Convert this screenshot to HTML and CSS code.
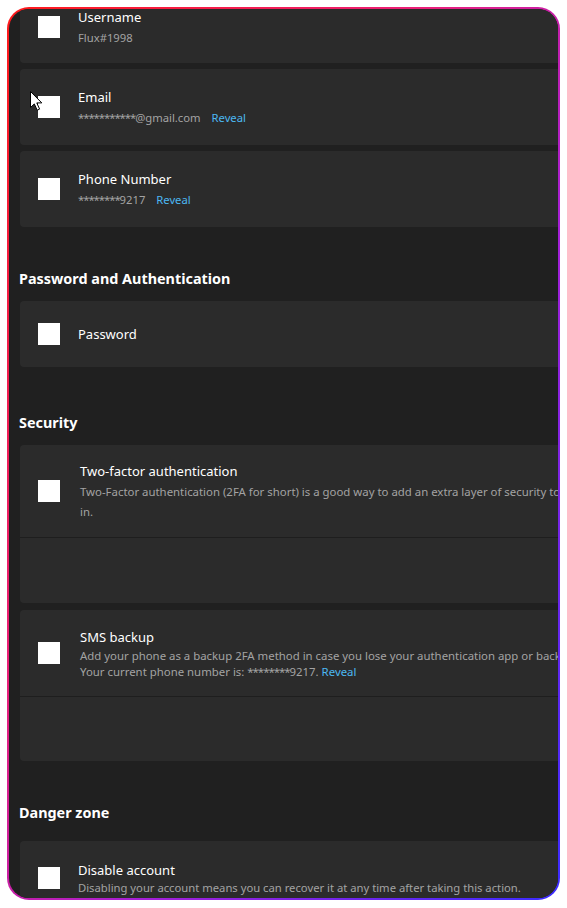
FILE: index.html
```html
<!DOCTYPE html>
<html lang="en">
<head>
<meta charset="utf-8">
<title>Account settings</title>
<link rel="stylesheet" href="styles.css">
</head>
<body>
<div class="window">
  <div class="viewport">
    <div class="content">
      <div class="group">
        <div class="card card-clipped">
          <span class="icon"></span>
          <div class="text">
            <div class="title">Username</div>
            <div class="sub">Flux#1998</div>
          </div>
        </div>
        <div class="card">
          <span class="icon"></span>
          <div class="text">
            <div class="title">Email</div>
            <div class="sub"><span class="mask">***********</span>@gmail.com <a class="reveal" href="#">Reveal</a></div>
          </div>
        </div>
        <div class="card">
          <span class="icon"></span>
          <div class="text">
            <div class="title">Phone Number</div>
            <div class="sub"><span class="mask">********</span>9217 <a class="reveal" href="#">Reveal</a></div>
          </div>
        </div>
      </div>

      <h2 class="section-title">Password and Authentication</h2>
      <div class="card card-single">
        <span class="icon"></span>
        <div class="text">
          <div class="title">Password</div>
        </div>
      </div>

      <h2 class="section-title section-title-wide">Security</h2>
      <div class="group group-loose">
        <div class="expander">
          <div class="expander-head">
            <span class="icon"></span>
            <div class="text">
              <div class="title">Two-factor authentication</div>
              <div class="desc">Two-Factor authentication (2FA for short) is a good way to add an extra layer of security to your account to make sure that only you can log<br>in.</div>
            </div>
          </div>
          <div class="expander-body"></div>
        </div>
        <div class="expander">
          <div class="expander-head expander-head-sms">
            <span class="icon"></span>
            <div class="text">
              <div class="title">SMS backup</div>
              <div class="desc desc-tight">Add your phone as a backup 2FA method in case you lose your authentication app or backup codes.<br>Your current phone number is: <span class="mask">********</span>9217. <a class="reveal-inline" href="#">Reveal</a></div>
            </div>
          </div>
          <div class="expander-body expander-body-sms"></div>
        </div>
      </div>

      <h2 class="section-title section-title-danger">Danger zone</h2>
      <div class="card card-compact">
        <span class="icon"></span>
        <div class="text">
          <div class="title">Disable account</div>
          <div class="sub">Disabling your account means you can recover it at any time after taking this action.</div>
        </div>
      </div>
    </div>
  </div>
  <svg class="cursor" width="13" height="20" viewBox="0 0 13 20" aria-hidden="true">
    <path d="M0.5 0.5 L0.5 16.5 L4.3 12.9 L7.2 19.2 L9.6 18.1 L6.8 11.9 L11.8 11.9 Z" fill="#fff" stroke="#000" stroke-width="1" stroke-linejoin="miter"/>
  </svg>
</div>
</body>
</html>
```

FILE: styles.css
```css
html, body {
  margin: 0;
  padding: 0;
  background: #ffffff;
}

body {
  font-family: "Noto Sans", "Open Sans", sans-serif;
  color: #ffffff;
}

.window {
  position: relative;
  margin: 7px;
  height: 893px;
  box-sizing: border-box;
  border: 2px solid transparent;
  border-radius: 22px;
  background:
    linear-gradient(#202020, #202020) padding-box,
    linear-gradient(to bottom right, #ff1a1a 0%, #ea1f7a 38%, #a61fd6 62%, #3a2cff 100%) border-box;
}

.window::before {
  content: "";
  position: absolute;
  inset: -4px;
  border-radius: 26px;
  background: linear-gradient(to bottom right, #ff1a1a 0%, #ea1f7a 38%, #a61fd6 62%, #3a2cff 100%);
  filter: blur(3px);
  opacity: 0.65;
  z-index: -1;
}

.viewport {
  height: 100%;
  overflow: hidden;
  border-radius: 20px;
}

.content {
  width: 820px;
  margin-top: -20px;
  padding-left: 11px;
}

.group {
  display: flex;
  flex-direction: column;
  gap: 6px;
}

.group-loose {
  gap: 7px;
}

.card {
  display: flex;
  align-items: center;
  gap: 18px;
  padding: 17px 18px;
  background: #2b2b2b;
  border-radius: 4px;
}

.card-clipped {
  padding-bottom: 15px;
}

.card-single {
  padding-top: 22px;
  padding-bottom: 22px;
}

.card-compact {
  padding-top: 19px;
  padding-bottom: 19px;
}

.icon {
  flex: none;
  width: 22px;
  height: 22px;
  background: #ffffff;
}

.text {
  min-width: 0;
}

.title {
  font-size: 13px;
  line-height: 22px;
  color: #ffffff;
}

.sub {
  font-size: 11.25px;
  line-height: 20px;
  color: #a3a3a3;
  white-space: nowrap;
}

.card-compact .title {
  line-height: 20px;
}

.card-compact .sub {
  line-height: 16px;
}

.mask {
  letter-spacing: -1px;
}

.reveal {
  margin-left: 8px;
  color: #4cb8f2;
  text-decoration: none;
}

.reveal-inline {
  color: #4cb8f2;
  text-decoration: none;
}

.section-title {
  margin: 42px 0 12px -1px;
  font-size: 14.4px;
  font-weight: 700;
  line-height: 20px;
  color: #ffffff;
}

.section-title-wide {
  margin-top: 46px;
}

.section-title-danger {
  margin-bottom: 18px;
}

.expander {
  background: #2b2b2b;
  border-radius: 4px;
}

.expander-head {
  display: flex;
  align-items: center;
  gap: 20px;
  padding: 15px 18px;
  border-bottom: 1px solid #1e1e1e;
}

.expander-head-sms {
  padding-top: 16px;
  padding-bottom: 16px;
}

.expander-body {
  height: 65px;
}

.expander-body-sms {
  height: 64px;
}

.desc {
  font-size: 11.4px;
  line-height: 20px;
  color: #a3a3a3;
  white-space: nowrap;
}

.desc-tight {
  line-height: 16px;
}

.cursor {
  position: absolute;
  left: 21px;
  top: 82px;
  display: block;
}
```
